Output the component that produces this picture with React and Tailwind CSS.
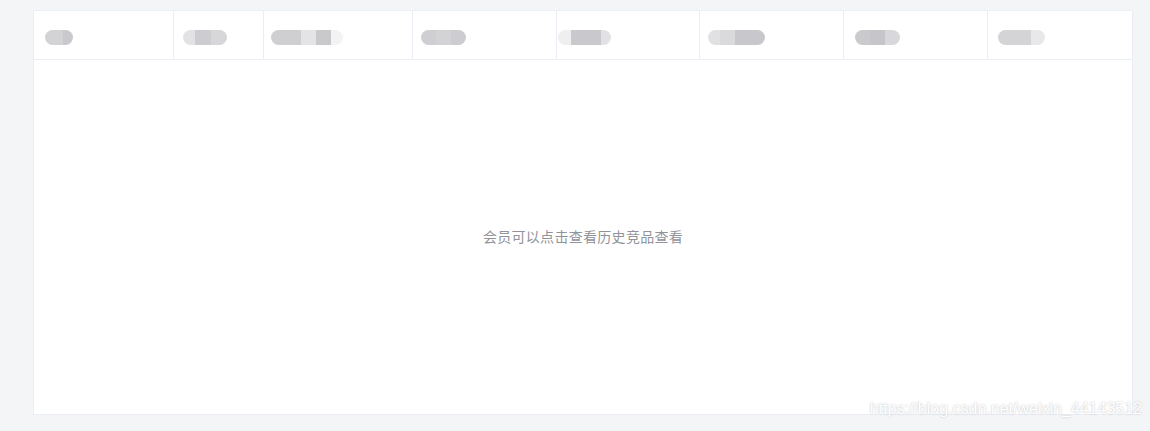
import React from "react";

// blurred header labels: each is a row of grey chunks
const columns = [
  { w: "w-[140px]", pl: "pl-[11px]", blob: [["#d3d3d6", 18], ["#c9c9cd", 10]] },
  { w: "w-[90px]", pl: "pl-[9px]", blob: [["#e2e2e4", 12], ["#cdcdd1", 16], ["#d7d7da", 16]] },
  { w: "w-[149px]", pl: "pl-[7px]", blob: [["#cfcfd2", 30], ["#e4e4e6", 15], ["#c9c9cc", 15], ["#f3f3f4", 12]] },
  { w: "w-[144px]", pl: "pl-[8px]", blob: [["#cfcfd3", 15], ["#d3d3d6", 15], ["#cdcdd1", 15]] },
  { w: "w-[144px]", pl: "pl-[1px]", blob: [["#efeff0", 13], ["#c9c9cd", 30], ["#e2e2e4", 10]] },
  { w: "w-[144px]", pl: "pl-[8px]", blob: [["#e1e1e3", 12], ["#dadadc", 15], ["#c8c8cc", 30]] },
  { w: "w-[144px]", pl: "pl-[11px]", blob: [["#cacacd", 15], ["#c6c6ca", 15], ["#d8d8db", 15]] },
  { w: "w-[144px]", pl: "pl-[10px]", blob: [["#d4d4d7", 33], ["#e8e8ea", 14]] },
];

function Blob({ parts }) {
  return (
    <div className="flex h-[15px] overflow-hidden rounded-full">
      {parts.map(([c, w], i) => (
        <div key={i} style={{ background: c, width: w }} className="h-full" />
      ))}
    </div>
  );
}

export default function App() {
  return (
    <div
      className="relative w-full h-[431px] bg-[#f4f5f7] pt-[10px] pl-[33px]"
      style={{ fontFamily: '"Liberation Sans", "Noto Sans CJK SC", sans-serif' }}
    >
      <div className="w-[1100px] h-[405px] bg-white border border-[#ebeef5] flex flex-col">
        {/* Header */}
        <div className="flex h-[49px] border-b border-[#ebeef5]">
          {columns.map((c, i) => (
            <div
              key={i}
              className={`${c.w} ${c.pl} pt-[4px] flex items-center ${i < columns.length - 1 ? "border-r border-[#ebeef5]" : ""}`}
            >
              <Blob parts={c.blob} />
            </div>
          ))}
        </div>

        {/* Empty state */}
        <div className="flex-1 flex items-center justify-center">
          <span className="text-[14px] tracking-[0.3px] text-[#909399]">会员可以点击查看历史竞品查看</span>
        </div>
      </div>

      {/* watermark */}
      <div
        className="absolute right-[8px] bottom-[10px] text-[16px] text-white"
        style={{ textShadow: "0 0 2px #b8b9bd" }}
      >
        https://blog.csdn.net/weixin_44143512
      </div>
    </div>
  );
}
